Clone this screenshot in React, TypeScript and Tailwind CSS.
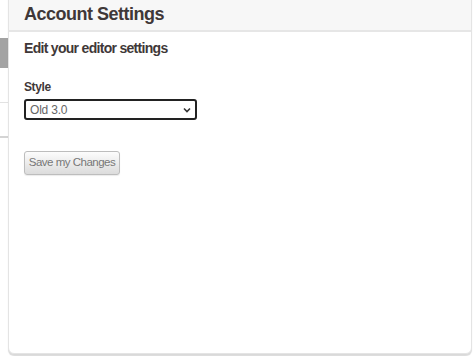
import React from "react";

export default function App() {
  return (
    <div
      className="relative w-[474px] h-[356px] bg-white overflow-hidden"
      style={{ fontFamily: '"Liberation Sans", Arial, sans-serif' }}
    >
      {/* page behind the dialog */}
      <div className="flex flex-col pt-[38px]">
        <div className="h-[30px] w-[8px] bg-[#a3a3a3]" />
        <div className="h-[34px] w-[8px]" />
        <div className="h-px w-[8px] bg-[#e2e2e2]" />
        <div className="h-[33px] w-[8px]" />
        <div className="h-[2px] w-[8px] bg-[#d4d4d4]" />
      </div>

      {/* dialog */}
      <div className="absolute left-[8px] top-[-6px] right-[2px] bottom-[2px] flex flex-col bg-white border border-[#e4e4e4] rounded-b-[6px] shadow-[0_2px_1px_rgba(0,0,0,0.15)]">
        <div className="h-[37px] shrink-0 bg-[#f7f7f7] border-b-2 border-[#e6e6e6] flex items-end pl-[15px] pb-[5px]">
          <h1 className="text-[18px] leading-[22px] font-bold tracking-[-0.5px] text-[#3f3838]">Account Settings</h1>
        </div>
        <div className="pl-[15px] pt-[7px] flex flex-col">
          <h2 className="text-[14px] leading-[18px] font-bold tracking-[-0.7px] text-[#3f3838]">Edit your editor settings</h2>
          <label className="mt-[23px] text-[12px] leading-[14px] font-bold tracking-[-0.4px] text-[#3f3838]">Style</label>
          <div className="mt-[5px] relative w-[173px] h-[21px] border-2 border-[#222] rounded-[3px] bg-white flex items-center pl-[4px] pr-[4px]">
            <span className="flex-1 text-[12px] tracking-[-0.2px] text-[#666]">Old 3.0</span>
            <svg width="8" height="6" viewBox="0 0 8 6" className="mt-[1px]">
              <path d="M1 1.5 L4 4.5 L7 1.5" fill="none" stroke="#333" strokeWidth="1.6" />
            </svg>
          </div>
          <button className="mt-[31px] w-[96px] h-[24px] border border-[#bdbdbd] rounded-[3px] bg-gradient-to-b from-[#fcfcfc] to-[#dcdcdc] text-[11.5px] tracking-[-0.5px] whitespace-nowrap text-[#777] flex items-center justify-center shadow-[0_1px_1px_rgba(0,0,0,0.08)]">
            Save my Changes
          </button>
        </div>
      </div>
    </div>
  );
}
